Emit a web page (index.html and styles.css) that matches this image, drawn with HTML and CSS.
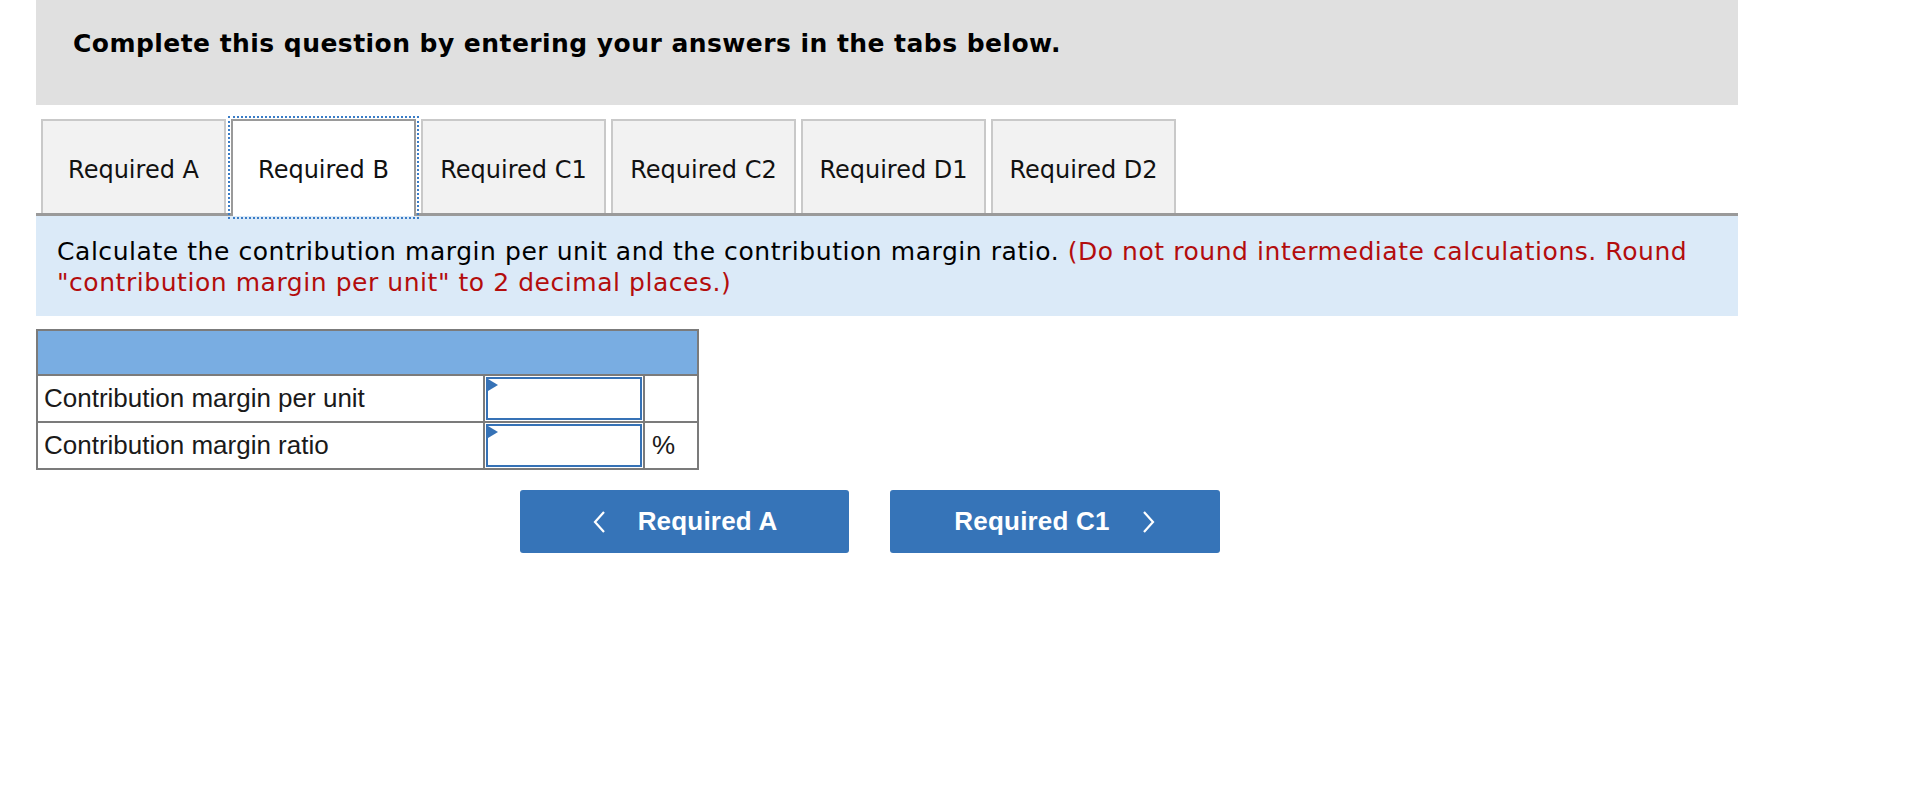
FILE: index.html
```html
<!DOCTYPE html>
<html>
<head>
<meta charset="utf-8">
<link rel="stylesheet" href="styles.css">
</head>
<body>
<div class="wrap">
  <div class="header">Complete this question by entering your answers in the tabs below.</div>
  <div class="tabs">
    <div class="tab">Required A</div>
    <div class="tab active">Required B</div>
    <div class="tab">Required C1</div>
    <div class="tab">Required C2</div>
    <div class="tab">Required D1</div>
    <div class="tab">Required D2</div>
  </div>
  <div class="instr">Calculate the contribution margin per unit and the contribution margin ratio. <span class="red">(Do not round intermediate calculations. Round "contribution margin per unit" to 2 decimal places.)</span></div>
  <table class="grid">
    <tr class="head"><td colspan="3"></td></tr>
    <tr>
      <td class="label">Contribution margin per unit</td>
      <td class="inp"><div class="box"><span class="flag"></span></div></td>
      <td class="unit"></td>
    </tr>
    <tr>
      <td class="label">Contribution margin ratio</td>
      <td class="inp"><div class="box"><span class="flag"></span></div></td>
      <td class="unit">%</td>
    </tr>
  </table>
  <div class="nav">
    <div class="btn prev"><svg class="chev" width="14" height="24" viewBox="0 0 14 24"><path d="M12 2 L3 12 L12 22" fill="none" stroke="#fff" stroke-width="2.2"/></svg><span>Required A</span></div>
    <div class="btn next"><span>Required C1</span><svg class="chev" width="14" height="24" viewBox="0 0 14 24"><path d="M2 2 L11 12 L2 22" fill="none" stroke="#fff" stroke-width="2.2"/></svg></div>
  </div>
</div>
</body>
</html>
```
FILE: styles.css
```css
html, body {
  margin: 0;
  padding: 0;
  background: #fff;
}
.wrap {
  margin-left: 36px;
  width: 1702px;
  font-family: "DejaVu Sans", Verdana, sans-serif;
  color: #000;
}
.header {
  background: #e0e0e0;
  height: 105px;
  box-sizing: border-box;
  padding: 29px 0 0 37px;
  font-size: 25px;
  letter-spacing: 0.45px;
  font-weight: bold;
  line-height: 30px;
}
.tabs {
  display: flex;
  margin-top: 14px;
  padding-left: 5px;
  border-bottom: 3px solid #9a9a9a;
  height: 94px;
}
.tab {
  width: 185px;
  height: 94px;
  box-sizing: border-box;
  margin-right: 5px;
  background: #f2f2f2;
  border: 2px solid #c9c9c9;
  border-bottom: none;
  display: flex;
  align-items: center;
  justify-content: center;
  font-size: 24px;
  padding-top: 6px;
  color: #111;
}
.tab.active {
  background: #fff;
  border-color: #9a9a9a;
  outline: 2px dotted #3a7cc6;
  outline-offset: 1px;
  position: relative;
  height: 97px;
  padding-bottom: 3px;
  margin-bottom: -3px;
}
.instr {
  background: #dbeaf8;
  height: 100px;
  box-sizing: border-box;
  padding: 20px 20px 0 21px;
  font-size: 25px;
  letter-spacing: 0.55px;
  line-height: 31px;
}
.red {
  color: #b30d0d;
}
.grid {
  margin-top: 13px;
  border-collapse: collapse;
  width: 663px;
  border: 2px solid #7b7b7b;
  font-family: "Liberation Sans", Arial, sans-serif;
  font-size: 26px;
  color: #1a1a1a;
}
.grid td {
  padding: 0;
  border: 2px solid #7b7b7b;
}
.grid tr.head td {
  background: #79ade2;
  height: 43px;
}
.grid td.label {
  width: 439px;
  height: 45px;
  padding-left: 6px;
}
.grid td.inp {
  width: 158px;
  padding: 0;
}
.grid td.unit {
  padding-left: 7px;
}
.box {
  position: relative;
  height: 43px;
  border: 2px solid #3672b6;
  box-sizing: border-box;
  margin: 0 1px;
}
.flag {
  position: absolute;
  left: 0;
  top: 0;
  width: 0;
  height: 0;
  border-top: 6px solid transparent;
  border-bottom: 6px solid transparent;
  border-left: 10px solid #3672b6;
}
.nav {
  display: flex;
  margin-top: 20px;
  margin-left: 484px;
  gap: 41px;
}
.btn {
  width: 329px;
  height: 63px;
  background: #3674b8;
  border-radius: 3px;
  color: #fff;
  font-family: "Liberation Sans", Arial, sans-serif;
  font-weight: bold;
  font-size: 26px;
  letter-spacing: 0.2px;
  display: flex;
  align-items: center;
  justify-content: center;
  gap: 32px;
}
.btn.next {
  width: 330px;
}
.chev {
  display: block;
}
```
